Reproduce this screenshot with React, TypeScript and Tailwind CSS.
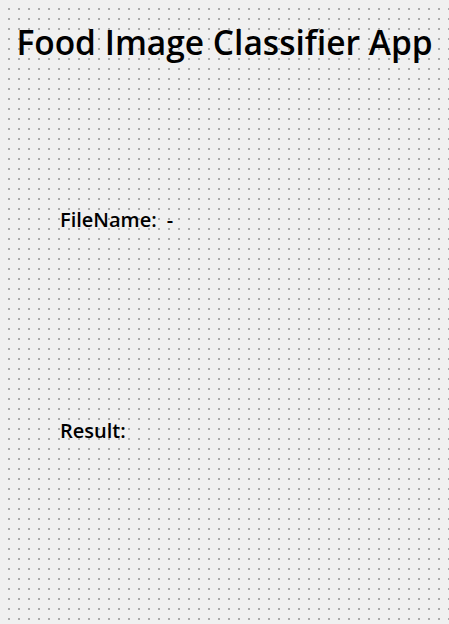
import React from "react";

export default function App() {
  return (
    <div className="min-h-[624px] w-full bg-[#f0f0f0] bg-[radial-gradient(circle,#a8a8a8_0.7px,transparent_1.1px)] bg-[size:10px_10px] bg-[position:4px_4px] font-['Open_Sans',sans-serif] text-black">
      <h1 className="pt-[18px] text-center text-[33.5px] font-semibold leading-[48px]">
        Food Image Classifier App
      </h1>
      <div className="pl-[60px] pt-[140px]">
        <div className="flex gap-[10px] text-[20px] font-semibold leading-[28px]">
          <span>FileName:</span>
          <span>-</span>
        </div>
        <div className="pt-[183px] text-[20px] font-semibold leading-[28px]">
          Result:
        </div>
      </div>
    </div>
  );
}
